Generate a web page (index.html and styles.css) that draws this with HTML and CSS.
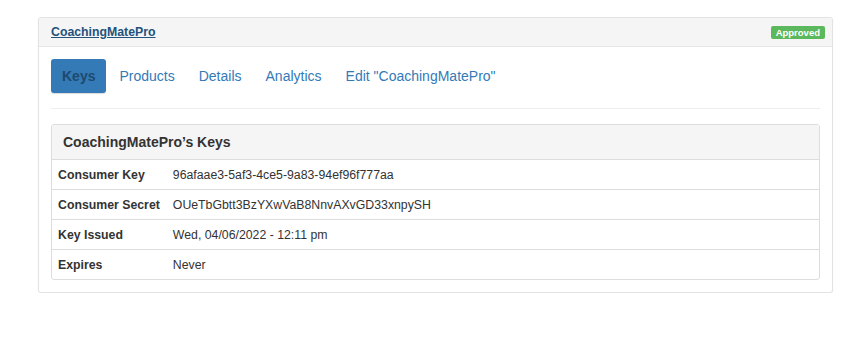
FILE: index.html
```html
<!DOCTYPE html>
<html>
<head>
<meta charset="utf-8">
<link rel="stylesheet" href="styles.css">
</head>
<body>
<div class="page">
  <div class="panel">
    <div class="panel-heading">
      <a class="app-title" href="#">CoachingMatePro</a>
      <span class="badge">Approved</span>
    </div>
    <div class="panel-body">
      <ul class="pills">
        <li class="active"><a href="#">Keys</a></li>
        <li><a href="#">Products</a></li>
        <li><a href="#">Details</a></li>
        <li><a href="#">Analytics</a></li>
        <li><a href="#">Edit "CoachingMatePro"</a></li>
      </ul>
      <hr class="rule">
      <div class="keys">
        <div class="keys-heading">CoachingMatePro’s Keys</div>
        <table class="keys-table">
          <tr><th>Consumer Key</th><td>96afaae3-5af3-4ce5-9a83-94ef96f777aa</td></tr>
          <tr><th>Consumer Secret</th><td>OUeTbGbtt3BzYXwVaB8NnvAXvGD33xnpySH</td></tr>
          <tr><th>Key Issued</th><td>Wed, 04/06/2022 - 12:11 pm</td></tr>
          <tr><th>Expires</th><td>Never</td></tr>
        </table>
      </div>
    </div>
  </div>
</div>
</body>
</html>
```

FILE: styles.css
```css
html, body {
  margin: 0;
  padding: 0;
  background: #fff;
  font-family: "Liberation Sans", Arial, sans-serif;
  color: #333;
}
.page {
  padding: 17px 32px 0 38px;
}
.panel {
  border: 1px solid #e3e3e3;
  border-radius: 3px;
  box-shadow: 0 1px 2px rgba(0,0,0,0.06);
  background: #fff;
}
.panel-heading {
  background: #f5f5f5;
  border-bottom: 1px solid #e6e6e6;
  height: 28px;
  padding: 0 7px 0 12px;
  display: flex;
  align-items: center;
  justify-content: space-between;
  border-radius: 3px 3px 0 0;
}
.app-title {
  font-size: 12.3px;
  font-weight: bold;
  color: #23527c;
  text-decoration: underline;
}
.badge {
  background: #5cb85c;
  color: #fff;
  font-size: 9.5px;
  font-weight: bold;
  padding: 1px 5px 1px;
  border-radius: 2px;
  line-height: 11px;
  margin-top: 1px;
}
.panel-body {
  padding: 12px 12px 12px 12px;
}
.pills {
  list-style: none;
  margin: 0;
  padding: 0;
  display: flex;
}
.pills li + li {
  margin-left: 2px;
}
.pills a {
  display: block;
  padding: 8px 11px;
  font-size: 14px;
  line-height: 18px;
  color: #337ab7;
  text-decoration: none;
  border-radius: 3px;
}
.pills .active a {
  background: #337ab7;
  color: #1d4a6e;
  font-weight: bold;
  box-shadow: 0 1px 1px rgba(0,0,0,0.15);
}
.rule {
  border: 0;
  border-top: 1px solid #eee;
  margin: 15px 0 15px;
}
.keys {
  border: 1px solid #ddd;
  border-radius: 3px;
  overflow: hidden;
}
.keys-heading {
  background: #f5f5f5;
  border-bottom: 1px solid #ddd;
  height: 34px;
  display: flex;
  align-items: center;
  padding-left: 11px;
  font-size: 14px;
  font-weight: bold;
  color: #333;
}
.keys-table {
  width: 100%;
  border-collapse: collapse;
  font-size: 12.3px;
}
.keys-table th, .keys-table td {
  height: 29px;
  text-align: left;
  vertical-align: middle;
  border-top: 1px solid #ddd;
}
.keys-table th {
  padding: 0 7px 0 6px;
  width: 1px;
  white-space: nowrap;
  font-weight: bold;
}
.keys-table td {
  padding: 0 7px 0 6px;
}
.keys-table tr:first-child th, .keys-table tr:first-child td {
  border-top: 0;
}
```
